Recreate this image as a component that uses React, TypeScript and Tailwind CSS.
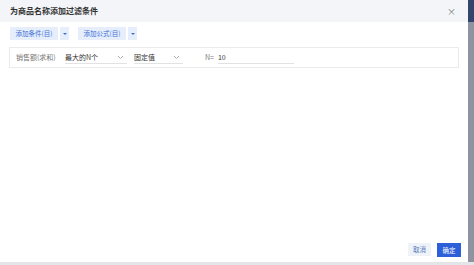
import React from 'react';

const font = { fontFamily: '"Noto Sans CJK SC", "Noto Sans", sans-serif' };

const Chevron: React.FC = () => (
  <svg width="7" height="5" viewBox="0 0 7 5" fill="none" stroke="#9aa0aa" strokeWidth="0.8">
    <path d="M1 1l2.5 2.5L6 1" />
  </svg>
);

const SplitButton: React.FC<{ label: string }> = ({ label }) => (
  <div className="flex items-center gap-[2px]">
    <div className="h-[13px] w-[48px] flex items-center justify-center bg-[#e6eefc] text-[#3d6fd6] text-[6.5px] leading-none">
      {label}
    </div>
    <div className="h-[13px] w-[9px] flex items-center justify-center bg-[#e6eefc]">
      <span className="block w-0 h-0 border-l-[2px] border-r-[2px] border-t-[2px] border-l-transparent border-r-transparent border-t-[#3d6fd6]" />
    </div>
  </div>
);

const App: React.FC = () => {
  return (
    <div className="w-[474px] h-[265px] flex flex-col bg-white overflow-hidden" style={font}>
      <div className="flex flex-1 min-h-0">
        <div className="w-[468px] flex flex-col">
          <div className="h-[22px] bg-[#f3f5f8] flex items-center justify-between pl-[10px] pr-[12px]">
            <span className="text-[8px] font-bold text-[#333] leading-none">为商品名称添加过滤条件</span>
            <span className="text-[9px] text-[#777] leading-none">×</span>
          </div>
          <div className="flex-1 px-[9px] pt-[5px]">
            <div className="flex gap-[9px] pl-[1px]">
              <SplitButton label="添加条件(目)" />
              <SplitButton label="添加公式(目)" />
            </div>
            <div className="mt-[7px] h-[21px] border border-[#ebebeb] flex items-center pl-[6px] text-[7px] leading-none">
              <span className="text-[#777] w-[49px]">销售额(求和)</span>
              <div className="w-[62px] h-[12px] flex items-center justify-between border-b border-[#e2e2e2] pr-[3px] text-[#333]">
                <span>最大的N个</span>
                <Chevron />
              </div>
              <div className="ml-[7px] w-[49px] h-[12px] flex items-center justify-between border-b border-[#e2e2e2] pr-[3px] text-[#333]">
                <span>固定值</span>
                <Chevron />
              </div>
              <span className="ml-[22px] text-[#777]">N=</span>
              <div className="ml-[4px] w-[76px] h-[12px] flex items-center border-b border-[#e2e2e2] text-[#333]">
                10
              </div>
            </div>
          </div>
          <div className="flex justify-end gap-[6px] pr-[7px] pb-[5px]">
            <div className="h-[13px] w-[23px] flex items-center justify-center bg-[#eef2f9] text-[#5a7bbd] text-[6.5px] leading-none">
              取消
            </div>
            <div className="h-[14px] w-[24px] flex items-center justify-center bg-[#2d5fd8] text-white text-[6.5px] leading-none">
              确定
            </div>
          </div>
        </div>
        <div className="flex-1 flex flex-col">
          <div className="h-[22px] bg-[#34456b]" />
          <div className="flex-1 bg-[#8d93a0]" />
        </div>
      </div>
      <div className="h-[3px] bg-[#e4e5e8]" />
    </div>
  );
};

export default App;
